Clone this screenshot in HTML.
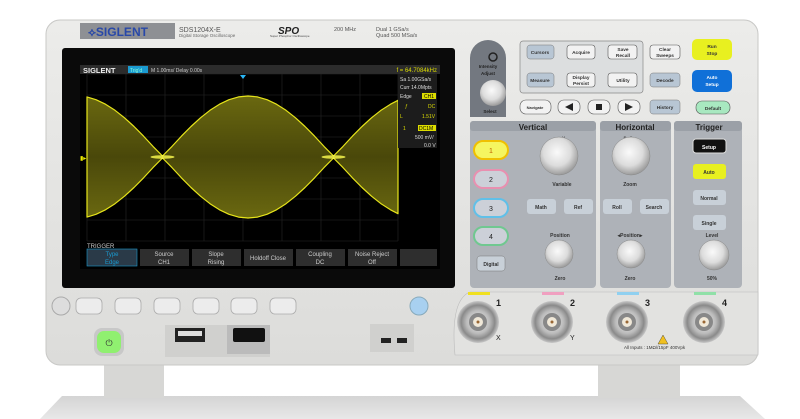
<!DOCTYPE html>
<html><head><style>
html,body{margin:0;padding:0;background:#fff;width:800px;height:419px;overflow:hidden}
svg{display:block}
text{font-family:"Liberation Sans",Arial,sans-serif}
</style></head><body>
<svg width="800" height="419" viewBox="0 0 800 419" xmlns="http://www.w3.org/2000/svg">
<defs>
<radialGradient id="knob" cx="45%" cy="40%" r="60%"><stop offset="0" stop-color="#fafafa"/><stop offset=".6" stop-color="#dcdcdc"/><stop offset="1" stop-color="#9a9a9a"/></radialGradient>
<radialGradient id="bnc" cx="50%" cy="50%" r="50%"><stop offset="0" stop-color="#eee"/><stop offset=".55" stop-color="#bbb"/><stop offset=".8" stop-color="#8a8a8a"/><stop offset="1" stop-color="#c8c8c8"/></radialGradient>
<linearGradient id="body" x1="0" y1="0" x2="0" y2="1"><stop offset="0" stop-color="#ececea"/><stop offset="1" stop-color="#dcdcda"/></linearGradient>
<linearGradient id="tray" x1="0" y1="0" x2="0" y2="1"><stop offset="0" stop-color="#d4d4d4"/><stop offset="1" stop-color="#e8e8e8"/></linearGradient>
<linearGradient id="wf" x1="0" y1="0" x2="0" y2="1"><stop offset="0" stop-color="#6a6810"/><stop offset=".5" stop-color="#4a480a"/><stop offset="1" stop-color="#6a6810"/></linearGradient>
</defs>
<path d="M40 419 L62 396 L740 396 L765 419Z" fill="url(#tray)"/>
<rect x="104" y="360" width="60" height="38" fill="#d7d7d5"/>
<rect x="598" y="360" width="82" height="38" fill="#d7d7d5"/>
<rect x="46" y="20" width="712" height="345" rx="14" fill="url(#body)" stroke="#c8c8c6"/>
<rect x="80" y="23" width="95" height="16" fill="#8e9094"/>
<text x="88" y="36" font-size="12" font-weight="bold" fill="#2848a8">⟡SIGLENT</text>
<text x="179" y="32" font-size="7" fill="#555">SDS1204X-E</text>
<text x="179" y="37" font-size="4.5" fill="#666">Digital Storage Oscilloscope</text>
<text x="278" y="34" font-size="10" font-weight="bold" fill="#222" font-style="italic">SPO</text>
<text x="270" y="37" font-size="3" fill="#444">Super Phosphor Oscilloscope</text>
<text x="334" y="31" font-size="5.5" fill="#555">200 MHz</text>
<text x="376" y="31" font-size="5.5" fill="#555">Dual  1 GSa/s</text>
<text x="376" y="37" font-size="5.5" fill="#555">Quad 500 MSa/s</text>
<rect x="62" y="48" width="393" height="240" rx="3" fill="#0a0a0a"/>
<rect x="80" y="65" width="360" height="204" fill="#000"/>
<rect x="80" y="65" width="360" height="9" fill="#2c2c2c"/>
<text x="83" y="73" font-size="7.5" font-weight="bold" fill="#eee">SIGLENT</text>
<rect x="128" y="66" width="20" height="7" fill="#1a9ad0"/>
<text x="130" y="72" font-size="5" fill="#8fd">Trig'd</text>
<text x="151" y="72" font-size="5" fill="#ccc">M 1.00ms/ Delay 0.00s</text>
<text x="437" y="72" font-size="6" fill="#dd0" text-anchor="end">f = 64.7084kHz</text>
<g stroke="#262626" stroke-width="0.6">
<path d="M87 74V241M126 74V241M165 74V241M204 74V241M243 74V241M282 74V241M321 74V241M360 74V241M398 74V241"/>
<path d="M87 74H398M87 95H398M87 116H398M87 137H398M87 157H398M87 178H398M87 199H398M87 220H398M87 241H398"/>
</g>
<path d="M240 75 L246 75 L243 79Z" fill="#29b6f6"/>
<path fill="url(#wf)" stroke="#e6e41a" stroke-width="1.2" stroke-linejoin="round" d="M87 96.9 L96 99.7 L105.5 104.2 L115 110.3 L124.5 117.8 L134 126.5 L143.5 136.1 L153 146.4 L162.5 156 L172 146.4 L181.5 136.1 L191 126.5 L200.5 117.8 L210 110.3 L219.5 104.2 L229 99.7 L238.5 96.9 L248 96 L257.5 96.9 L267 99.7 L276.5 104.2 L286 110.3 L295.5 117.8 L305 126.5 L314.5 136.1 L324 146.4 L333.5 156 L343 146.4 L352.5 136.1 L362 126.5 L371.5 117.8 L381 110.3 L390.5 104.2 L398 100.3 L398 213.7 L390.5 209.8 L381 203.7 L371.5 196.2 L362 187.5 L352.5 177.9 L343 167.6 L333.5 158 L324 167.6 L314.5 177.9 L305 187.5 L295.5 196.2 L286 203.7 L276.5 209.8 L267 214.3 L257.5 217.1 L248 218 L238.5 217.1 L229 214.3 L219.5 209.8 L210 203.7 L200.5 196.2 L191 187.5 L181.5 177.9 L172 167.6 L162.5 158 L153 167.6 L143.5 177.9 L134 187.5 L124.5 196.2 L115 203.7 L105.5 209.8 L96 214.3 L87 217.1Z"/>
<ellipse cx="162.5" cy="157" rx="12" ry="1.8" fill="#ffff50" opacity=".8"/>
<ellipse cx="333.5" cy="157" rx="12" ry="1.8" fill="#ffff50" opacity=".8"/>
<text x="80" y="160" font-size="6" fill="#ee0">▮▸</text>
<rect x="398" y="74" width="39" height="74" fill="#1c1c1c"/>
<g font-size="5" fill="#ddd">
<text x="400" y="81">Sa 1.00GSa/s</text><text x="400" y="89">Curr 14.0Mpts</text>
<text x="400" y="98">Edge</text><rect x="422" y="93" width="14" height="6" fill="#dd0"/><text x="424" y="98" fill="#000">CH1</text>
<text x="405" y="108" fill="#dd0">ƒ</text><text x="428" y="108" fill="#dd0">DC</text>
<text x="400" y="118" fill="#dd0">L</text><text x="422" y="118" fill="#dd0">1.51V</text>
<text x="403" y="130" fill="#dd0">1</text><rect x="418" y="125" width="18" height="6" fill="#dd0"/><text x="419" y="130" fill="#000">DC1M</text>
<text x="415" y="139">500 mV/</text><text x="424" y="147">0.0 V</text>
</g>
<text x="87" y="248" font-size="6" fill="#ccc">TRIGGER</text>
<g font-size="6" fill="#ccc" text-anchor="middle">
<rect x="87" y="249" width="50" height="17" fill="#2a3a48" stroke="#1a9ad0" stroke-width=".6"/>
<text x="112" y="256" fill="#1a9ad0">Type</text><text x="112" y="264" fill="#1a9ad0">Edge</text>
<rect x="140" y="249" width="49" height="17" fill="#2e2e2e"/><text x="164" y="256">Source</text><text x="164" y="264">CH1</text>
<rect x="192" y="249" width="49" height="17" fill="#2e2e2e"/><text x="216" y="256">Slope</text><text x="216" y="264">Rising</text>
<rect x="244" y="249" width="49" height="17" fill="#2e2e2e"/><text x="268" y="260">Holdoff Close</text>
<rect x="296" y="249" width="49" height="17" fill="#2e2e2e"/><text x="320" y="256">Coupling</text><text x="320" y="264">DC</text>
<rect x="348" y="249" width="49" height="17" fill="#2e2e2e"/><text x="372" y="256">Noise Reject</text><text x="372" y="264">Off</text>
<rect x="400" y="249" width="37" height="17" fill="#2e2e2e"/>
</g>
<path d="M470 58 A18 18 0 0 1 506 58 V117 H470Z" fill="#737880"/>
<circle cx="493" cy="57" r="4" fill="none" stroke="#222" stroke-width="1.5"/>
<text x="488" y="68" font-size="4.5" font-weight="bold" fill="#222" text-anchor="middle">Intensity</text>
<text x="488" y="75" font-size="4.5" font-weight="bold" fill="#222" text-anchor="middle">Adjust</text>
<circle cx="493" cy="93" r="13" fill="url(#knob)"/>
<text x="490" y="113" font-size="4.5" font-weight="bold" fill="#222" text-anchor="middle">Select</text>
<rect x="520" y="41" width="123" height="52" rx="3" fill="#dcdedf" stroke="#888" stroke-width=".7"/>
<g font-size="4.8" font-weight="bold" text-anchor="middle" fill="#333">
<rect x="527" y="45" width="27" height="14" rx="3" fill="#b8c6d4" stroke="#777" stroke-width=".5"/><text x="540" y="54">Cursors</text>
<rect x="567" y="45" width="28" height="14" rx="3" fill="#f2f2f2" stroke="#555" stroke-width=".6"/><text x="581" y="54">Acquire</text>
<rect x="608" y="45" width="29" height="14" rx="3" fill="#f2f2f2" stroke="#555" stroke-width=".6"/><text x="623" y="51">Save</text><text x="623" y="57">Recall</text>
<rect x="527" y="73" width="27" height="14" rx="3" fill="#b8c6d4" stroke="#777" stroke-width=".5"/><text x="540" y="82">Measure</text>
<rect x="567" y="73" width="28" height="14" rx="3" fill="#f2f2f2" stroke="#555" stroke-width=".6"/><text x="581" y="79">Display</text><text x="581" y="85">Persist</text>
<rect x="608" y="73" width="29" height="14" rx="3" fill="#f2f2f2" stroke="#555" stroke-width=".6"/><text x="623" y="82">Utility</text>
<rect x="650" y="45" width="30" height="14" rx="3" fill="#f2f2f2" stroke="#555" stroke-width=".6"/><text x="665" y="51">Clear</text><text x="665" y="57">Sweeps</text>
<rect x="650" y="73" width="30" height="14" rx="3" fill="#b8c6d4" stroke="#777" stroke-width=".5"/><text x="665" y="82">Decode</text>
<rect x="692" y="39" width="40" height="21" rx="5" fill="#e8f020"/><text x="712" y="48">Run</text><text x="712" y="55">Stop</text>
<rect x="692" y="70" width="40" height="22" rx="5" fill="#1070d8"/><text x="712" y="79" fill="#fff">Auto</text><text x="712" y="86" fill="#fff">Setup</text>
<rect x="520" y="100" width="31" height="14" rx="6" fill="#f2f2f2" stroke="#555" stroke-width=".6"/><text x="535" y="109" font-size="4">Navigate</text>
<rect x="558" y="100" width="22" height="14" rx="6" fill="#f2f2f2" stroke="#555" stroke-width=".6"/><path d="M565 107 L573 103 V111Z" fill="#222"/>
<rect x="588" y="100" width="22" height="14" rx="6" fill="#f2f2f2" stroke="#555" stroke-width=".6"/><rect x="596" y="104" width="6" height="6" fill="#222"/>
<rect x="618" y="100" width="22" height="14" rx="6" fill="#f2f2f2" stroke="#555" stroke-width=".6"/><path d="M633 107 L625 103 V111Z" fill="#222"/>
<rect x="650" y="100" width="30" height="14" rx="3" fill="#b8c6d4" stroke="#777" stroke-width=".5"/><text x="665" y="109">History</text>
<rect x="696" y="101" width="34" height="13" rx="6" fill="#a8e8c0" stroke="#555" stroke-width=".6"/><text x="713" y="110">Default</text>
</g>
<rect x="470" y="121" width="126" height="167" rx="4" fill="#aeb2b8"/>
<rect x="600" y="121" width="71" height="167" rx="4" fill="#aeb2b8"/>
<rect x="674" y="121" width="68" height="167" rx="4" fill="#aeb2b8"/>
<rect x="470" y="121" width="126" height="10" rx="3" fill="#9ba0a7"/>
<rect x="600" y="121" width="71" height="10" rx="3" fill="#9ba0a7"/>
<rect x="674" y="121" width="68" height="10" rx="3" fill="#9ba0a7"/>
<g font-size="8" font-weight="bold" fill="#222" text-anchor="middle">
<text x="533" y="130">Vertical</text><text x="635" y="130">Horizontal</text><text x="709" y="130">Trigger</text>
</g>
<g font-size="7" text-anchor="middle" fill="#222">
<rect x="474" y="141" width="34" height="18" rx="9" fill="#f5f560" stroke="#f0c000" stroke-width="2"/><text x="491" y="153" fill="#c06000">1</text>
<rect x="474" y="170" width="34" height="18" rx="9" fill="#ccd0d8" stroke="#e890b0" stroke-width="2"/><text x="491" y="182">2</text>
<rect x="474" y="199" width="34" height="18" rx="9" fill="#ccd0d8" stroke="#60c0e8" stroke-width="2"/><text x="491" y="211">3</text>
<rect x="474" y="227" width="34" height="18" rx="9" fill="#ccd0d8" stroke="#70c890" stroke-width="2"/><text x="491" y="239">4</text>
</g>
<g font-size="5" font-weight="bold" text-anchor="middle" fill="#333">
<rect x="477" y="256" width="28" height="15" rx="3" fill="#c8d0d8" stroke="#777" stroke-width=".5"/><text x="491" y="266">Digital</text>
<rect x="527" y="199" width="29" height="15" rx="3" fill="#c8d0d8"/><text x="541" y="209">Math</text>
<rect x="564" y="199" width="29" height="15" rx="3" fill="#c8d0d8"/><text x="578" y="209">Ref</text>
<rect x="603" y="199" width="29" height="15" rx="3" fill="#c8d0d8"/><text x="617" y="209">Roll</text>
<rect x="640" y="199" width="29" height="15" rx="3" fill="#c8d0d8"/><text x="654" y="209">Search</text>
<rect x="693" y="139" width="33" height="14" rx="3" fill="#111" stroke="#ddd" stroke-width="1"/><text x="709" y="149" fill="#fff">Setup</text>
<rect x="693" y="164" width="33" height="15" rx="3" fill="#e8f020"/><text x="709" y="174">Auto</text>
<rect x="693" y="190" width="33" height="15" rx="3" fill="#c8d0d8"/><text x="709" y="200">Normal</text>
<rect x="693" y="215" width="33" height="15" rx="3" fill="#c8d0d8"/><text x="709" y="225">Single</text>
<text x="560" y="139" font-size="4">v            mV</text><text x="628" y="139" font-size="4">S            nS</text>
<text x="562" y="186">Variable</text><text x="630" y="186">Zoom</text>
<text x="560" y="237">Position</text><text x="630" y="237">◂Position▸</text><text x="712" y="237">Level</text>
<text x="560" y="280">Zero</text><text x="630" y="280">Zero</text><text x="712" y="280">50%</text>
</g>
<circle cx="559" cy="156" r="19" fill="url(#knob)" stroke="#888" stroke-width=".5"/>
<circle cx="631" cy="156" r="19" fill="url(#knob)" stroke="#888" stroke-width=".5"/>
<circle cx="559" cy="254" r="14" fill="url(#knob)" stroke="#888" stroke-width=".5"/>
<circle cx="631" cy="254" r="14" fill="url(#knob)" stroke="#888" stroke-width=".5"/>
<circle cx="714" cy="255" r="15" fill="url(#knob)" stroke="#888" stroke-width=".5"/>
<circle cx="61" cy="306" r="9" fill="#ddd" stroke="#aaa"/>
<g fill="#ececec" stroke="#aaa" stroke-width=".8">
<rect x="76" y="298" width="26" height="16" rx="5"/><rect x="115" y="298" width="26" height="16" rx="5"/><rect x="154" y="298" width="26" height="16" rx="5"/><rect x="193" y="298" width="26" height="16" rx="5"/><rect x="231" y="298" width="26" height="16" rx="5"/><rect x="270" y="298" width="26" height="16" rx="5"/>
</g>
<circle cx="419" cy="306" r="9" fill="#a8d0f0" stroke="#8ab"/>
<rect x="94" y="328" width="30" height="28" rx="8" fill="#c8c8c8"/>
<rect x="97" y="331" width="24" height="22" rx="7" fill="#90f070"/>
<text x="109" y="346" font-size="9" text-anchor="middle" fill="#333">⏻</text>
<rect x="165" y="325" width="105" height="32" fill="#d0d0ce"/>
<rect x="175" y="328" width="30" height="14" fill="#222"/><rect x="178" y="331" width="24" height="5" fill="#ddd"/>
<rect x="227" y="325" width="43" height="29" fill="#bbb"/>
<rect x="233" y="328" width="32" height="14" rx="2" fill="#111"/>
<rect x="370" y="324" width="44" height="28" fill="#d0d0ce"/>
<rect x="381" y="338" width="10" height="5" fill="#222"/><rect x="397" y="338" width="10" height="5" fill="#222"/>
<path d="M455 355 Q450 300 470 292 H758 V355Z" fill="#e2e2e0" stroke="#bbb" stroke-width=".6"/>
<g font-size="9" font-weight="bold" fill="#222">
<rect x="468" y="292" width="22" height="3" fill="#f0e020"/><text x="496" y="306">1</text><text x="496" y="340" font-size="7" font-weight="normal">X</text>
<rect x="542" y="292" width="22" height="3" fill="#f0a0c0"/><text x="570" y="306">2</text><text x="570" y="340" font-size="7" font-weight="normal">Y</text>
<rect x="617" y="292" width="22" height="3" fill="#90d0f0"/><text x="645" y="306">3</text>
<rect x="694" y="292" width="22" height="3" fill="#90e0a8"/><text x="722" y="306">4</text>
</g>
<g>
<circle cx="478" cy="322" r="21" fill="url(#bnc)"/><circle cx="478" cy="322" r="9" fill="#888"/><circle cx="478" cy="322" r="5" fill="#f0e8d8"/><circle cx="478" cy="322" r="1.5" fill="#963"/>
<circle cx="552" cy="322" r="21" fill="url(#bnc)"/><circle cx="552" cy="322" r="9" fill="#888"/><circle cx="552" cy="322" r="5" fill="#f0e8d8"/><circle cx="552" cy="322" r="1.5" fill="#963"/>
<circle cx="627" cy="322" r="21" fill="url(#bnc)"/><circle cx="627" cy="322" r="9" fill="#888"/><circle cx="627" cy="322" r="5" fill="#f0e8d8"/><circle cx="627" cy="322" r="1.5" fill="#963"/>
<circle cx="704" cy="322" r="21" fill="url(#bnc)"/><circle cx="704" cy="322" r="9" fill="#888"/><circle cx="704" cy="322" r="5" fill="#f0e8d8"/><circle cx="704" cy="322" r="1.5" fill="#963"/>
</g>
<path d="M663 335 L668 344 H658Z" fill="#f0c020" stroke="#333" stroke-width=".4"/>
<text x="624" y="349" font-size="4.5" fill="#333">All Inputs :  1MΩ//15pF  400Vpk</text>
</svg>
</body></html>
